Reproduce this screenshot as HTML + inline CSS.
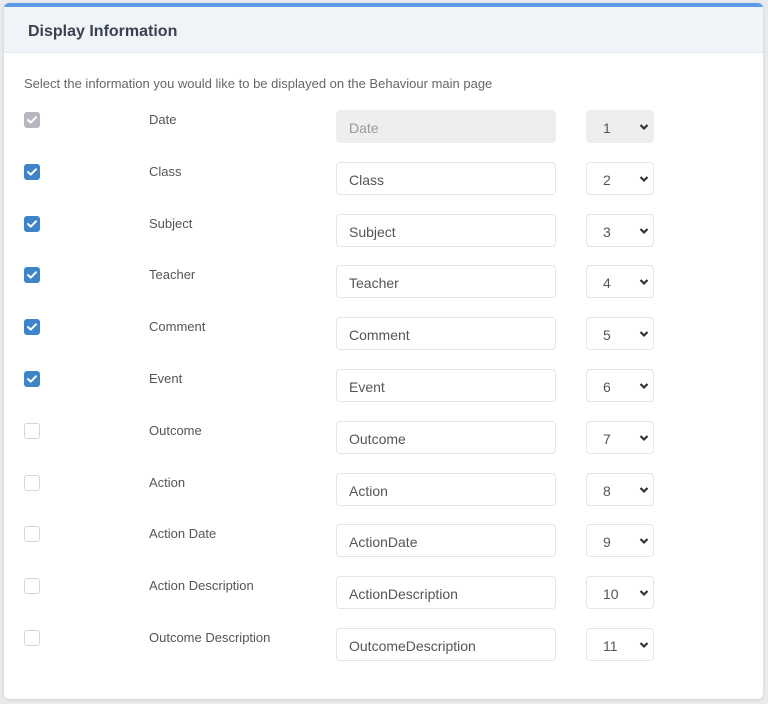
<!DOCTYPE html>
<html><head><style>
body{margin:0;width:768px;height:704px;background:#e9eaec;font-family:"Liberation Sans",sans-serif;position:relative;overflow:hidden}
.card{position:absolute;left:4px;top:3px;width:759px;height:696px;background:#fff;border-radius:5px;border-top:4px solid #5b9be8;box-sizing:border-box;box-shadow:0 1px 3px rgba(0,0,0,.12);overflow:hidden}
.desc{position:absolute;left:24px;top:76px;font-size:13px;color:#666}
.cb{position:absolute;left:24px;width:16px;height:16px;border-radius:3px;box-sizing:border-box}
.cb.on{background:#3e84c8}
.cb.dis{background:#b4b8bc}
.cb.off{border:1px solid #d4d7da;background:#fff}
.cb svg{position:absolute;left:3px;top:4px}
.lb{position:absolute;left:149px;font-size:13px;color:#555}
.in{position:absolute;left:336px;width:220px;height:33px;border:1px solid #e3e5e8;border-radius:4px;box-sizing:border-box;font-size:14px;color:#555;padding:9px 0 0 12px}
.in.d{background:#eeeeee;color:#999;border-color:#eee}
.sel{position:absolute;left:586px;width:68px;height:33px;border:1px solid #e3e5e8;border-radius:4px;box-sizing:border-box;font-size:14px;color:#555;padding:9px 0 0 16px}
.sel.d{background:#eeeeee;border-color:#eee}
.sel svg{position:absolute;left:52px;top:12px;width:10px;height:8px}
</style></head><body>
<div class="card"></div>
<div style="position:absolute;left:4px;top:7px;width:759px;height:46px;background:#f0f4f9;border-bottom:1px solid #e2e6eb;box-sizing:border-box"></div>
<div style="position:absolute;left:28px;top:23px;font-size:16px;font-weight:bold;color:#3a4150">Display Information</div>
<div class="desc">Select the information you would like to be displayed on the Behaviour main page</div>
<div id="rows"></div>
<script>
var L=["Date","Class","Subject","Teacher","Comment","Event","Outcome","Action","Action Date","Action Description","Outcome Description"];
var V=["Date","Class","Subject","Teacher","Comment","Event","Outcome","Action","ActionDate","ActionDescription","OutcomeDescription"];
var h="";
var chk='<svg width="10" height="8" viewBox="0 0 10 8"><path d="M1 4l2.8 2.6L9 1.3" stroke="#fff" stroke-width="2" fill="none" stroke-linecap="round" stroke-linejoin="round"/></svg>';
var arr='<svg width="10" height="8" viewBox="0 0 10 8"><path d="M1.5 2l3.5 3.5 3.5-3.5" stroke="#333" stroke-width="2.2" fill="none"/></svg>';
for(var i=0;i<11;i++){var t=Math.round(110+i*51.8);
var c=i==0?"dis":(i<6?"on":"off");
h+='<div class="cb '+c+'" style="top:'+(t+2)+'px">'+(i<6?chk:'')+'</div>';
h+='<div class="lb" style="top:'+(t+2)+'px">'+L[i]+'</div>';
h+='<div class="in'+(i==0?' d':'')+'" style="top:'+t+'px">'+V[i]+'</div>';
h+='<div class="sel'+(i==0?' d':'')+'" style="top:'+t+'px"><span>'+(i+1)+'</span>'+arr+'</div>';}
document.getElementById("rows").innerHTML=h;
</script>
</body></html>
